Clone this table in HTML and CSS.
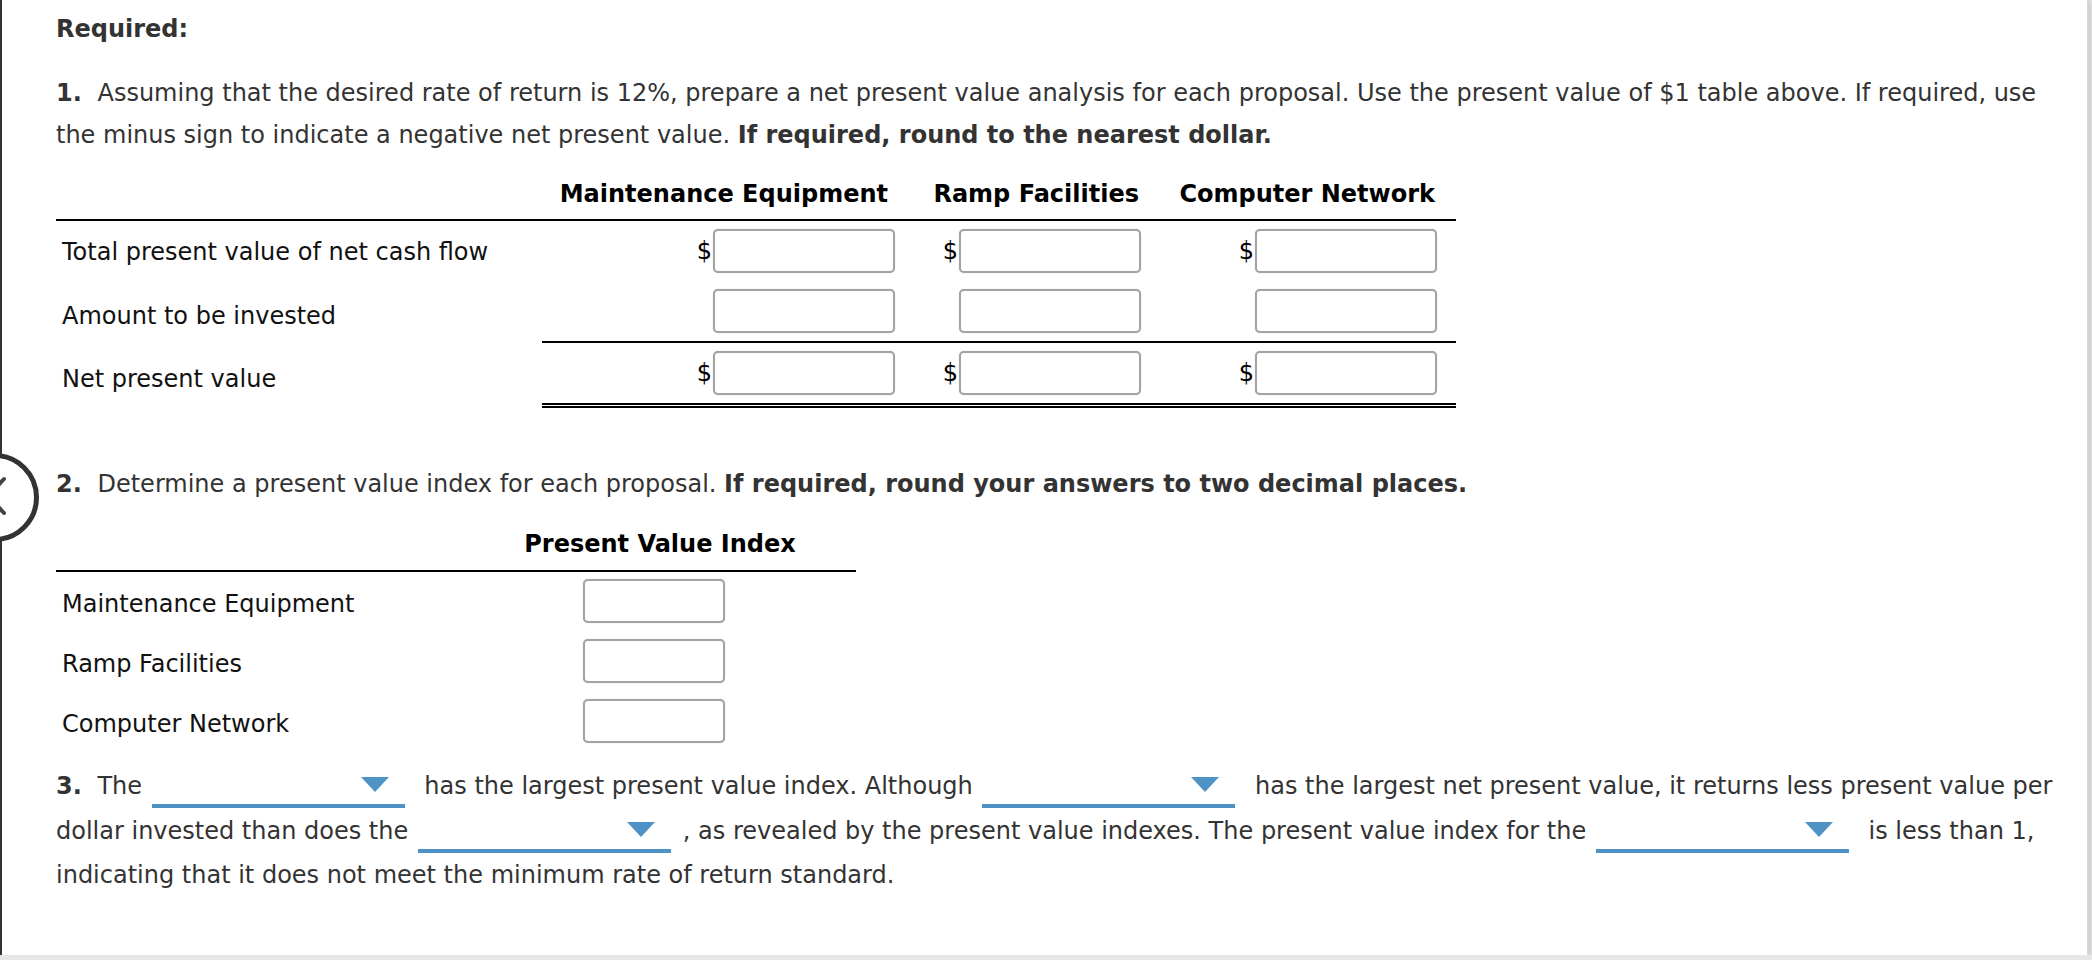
FILE: index.html
```html
<!DOCTYPE html>
<html lang="en">
<head>
<meta charset="utf-8">
<title>Net present value analysis</title>
<link rel="stylesheet" href="styles.css">
</head>
<body>
<div class="page">
  <div class="nav-btn" aria-label="Previous">
    <svg class="nav-chev" width="79" height="79" viewBox="0 0 79 79"><path d="M49 21 L33 38 L49 55" fill="none" stroke="#444" stroke-width="4" stroke-linecap="round" stroke-linejoin="round"/></svg>
  </div>

  <p class="required">Required:</p>

  <p class="q q1"><b class="num">1.</b> Assuming that the desired rate of return is 12%, prepare a net present value analysis for each proposal. Use the present value of $1 table above. If required, use the minus sign to indicate a negative net present value. <b>If required, round to the nearest dollar.</b></p>

  <div class="npv">
    <div class="npv-row npv-head">
      <div class="cell"></div>
      <div class="cell hd hd-1">Maintenance Equipment</div>
      <div class="cell hd hd-2">Ramp Facilities</div>
      <div class="cell hd hd-3">Computer Network</div>
      <div class="cell"></div>
    </div>
    <div class="npv-row">
      <div class="cell label label-r1">Total present value of net cash flow</div>
      <div class="cell val"><span class="cur">$</span><span class="inp"></span></div>
      <div class="cell val"><span class="cur">$</span><span class="inp"></span></div>
      <div class="cell val"><span class="cur">$</span><span class="inp"></span></div>
      <div class="cell"></div>
    </div>
    <div class="npv-row">
      <div class="cell label label-r2">Amount to be invested</div>
      <div class="cell val"><span class="inp"></span></div>
      <div class="cell val"><span class="inp"></span></div>
      <div class="cell val"><span class="inp"></span></div>
      <div class="cell"></div>
    </div>
    <div class="npv-row npv-total">
      <div class="cell label label-r3">Net present value</div>
      <div class="cell val ruled"><span class="cur">$</span><span class="inp"></span></div>
      <div class="cell val ruled"><span class="cur">$</span><span class="inp"></span></div>
      <div class="cell val ruled"><span class="cur">$</span><span class="inp"></span></div>
      <div class="cell ruled"></div>
    </div>
  </div>

  <p class="q q2"><b class="num">2.</b> Determine a present value index for each proposal. <b>If required, round your answers to two decimal places.</b></p>

  <div class="pvi">
    <div class="pvi-row pvi-head">
      <div class="cell"></div>
      <div class="cell hd pvi-hd">Present Value Index</div>
    </div>
    <div class="pvi-row">
      <div class="cell label pvi-label">Maintenance Equipment</div>
      <div class="cell pvi-val"><span class="inp inp-sm"></span></div>
    </div>
    <div class="pvi-row">
      <div class="cell label pvi-label">Ramp Facilities</div>
      <div class="cell pvi-val"><span class="inp inp-sm"></span></div>
    </div>
    <div class="pvi-row">
      <div class="cell label pvi-label">Computer Network</div>
      <div class="cell pvi-val"><span class="inp inp-sm"></span></div>
    </div>
  </div>

  <p class="q q3"><b class="num">3.</b> The <span class="dd"><svg class="dd-arrow" width="28" height="15" viewBox="0 0 28 15"><path d="M0 0 H28 L14 15 Z" fill="#4f93c6"/></svg></span> has the largest present value index. Although <span class="dd"><svg class="dd-arrow" width="28" height="15" viewBox="0 0 28 15"><path d="M0 0 H28 L14 15 Z" fill="#4f93c6"/></svg></span> has the largest net present value, it returns less present value per dollar invested than does the <span class="dd"><svg class="dd-arrow" width="28" height="15" viewBox="0 0 28 15"><path d="M0 0 H28 L14 15 Z" fill="#4f93c6"/></svg></span>, as revealed by the present value indexes. The present value index for the <span class="dd"><svg class="dd-arrow" width="28" height="15" viewBox="0 0 28 15"><path d="M0 0 H28 L14 15 Z" fill="#4f93c6"/></svg></span> is less than 1, indicating that it does not meet the minimum rate of return standard.</p>
</div>
</body>
</html>
```

FILE: styles.css
```css
* { box-sizing: border-box; }

html, body {
  margin: 0;
  padding: 0;
  background: #e6e6e6;
  overflow: hidden;
}

body {
  font-family: "DejaVu Sans", Verdana, sans-serif;
  font-size: 24px;
  color: #333;
}

.page {
  position: relative;
  width: 2089px;
  height: 955px;
  background: #fff;
  border-left: 2px solid #333;
  border-right: 2px solid #d6d6d6;
  padding: 8px 0 0 54px;
  box-shadow: 0 2px 5px rgba(0, 0, 0, 0.25);
}

p { margin: 0; }

.required {
  font-weight: bold;
  line-height: 42px;
}

.q {
  line-height: 42px;
  width: 2030px;
}

.q1 {
  width: 2010px;
  margin-top: 22px;
}

.num { margin-right: 8px; }

/* ---------- NPV table ---------- */
.npv {
  width: 1400px;
  margin-top: 17px;
}

.npv-row {
  display: grid;
  grid-template-columns: 486px 353px 246px 296px 19px;
}

.cell {
  display: flex;
  align-items: center;
}

.label {
  padding-left: 6px;
  color: #111;
}

.label-r1 { padding-top: 2px; }
.label-r2 { padding-top: 9px; }
.label-r3 { padding-top: 8px; }

.hd {
  font-weight: bold;
  color: #000;
  line-height: 42px;
  justify-content: flex-end;
}

.npv-head {
  border-bottom: 2px solid #000;
  padding-bottom: 4px;
}

.hd-1 { padding-right: 7px; }
.hd-2 { padding-right: 2px; }
.hd-3 { padding-right: 2px; }

.val {
  justify-content: flex-end;
  padding: 8px 0;
}

.cur {
  color: #000;
  margin-right: 1px;
}

.inp {
  display: block;
  width: 182px;
  height: 44px;
  border: 2px solid #a3a3a3;
  border-radius: 5px;
  background: #fff;
  box-shadow: 0 0 1px rgba(0, 0, 0, 0.3);
}

.ruled {
  border-top: 2px solid #000;
  border-bottom: 5px double #000;
}

/* ---------- PVI table ---------- */
.q2 { margin-top: 55px; }

.pvi {
  width: 800px;
  margin-top: 18px;
}

.pvi-row {
  display: grid;
  grid-template-columns: 408px 392px;
}

.pvi-head {
  border-bottom: 2px solid #000;
  padding-bottom: 5px;
}

.pvi-hd {
  justify-content: center;
}

.pvi-label { padding-top: 3px; }

.pvi-val {
  padding: 7px 0 9px 119px;
}

.inp-sm { width: 142px; }

/* ---------- Sentence with dropdowns ---------- */
.q3 {
  margin-top: 12px;
  line-height: 44.5px;
}

.dd {
  display: inline-block;
  width: 253px;
  height: 34px;
  margin: 0 12px 0 2px;
  border-bottom: 4px solid #4f93c6;
  vertical-align: -14px;
}

.dd-arrow {
  display: block;
  margin: 3px 16px 0 auto;
}

/* ---------- carousel button ---------- */
.nav-btn {
  position: absolute;
  left: -52px;
  top: 453px;
  width: 89px;
  height: 89px;
  border-radius: 50%;
  border: 5px solid #333;
  background: #fff;
  overflow: hidden;
}

.nav-chev {
  position: absolute;
  left: 0;
  top: 0;
}
```
